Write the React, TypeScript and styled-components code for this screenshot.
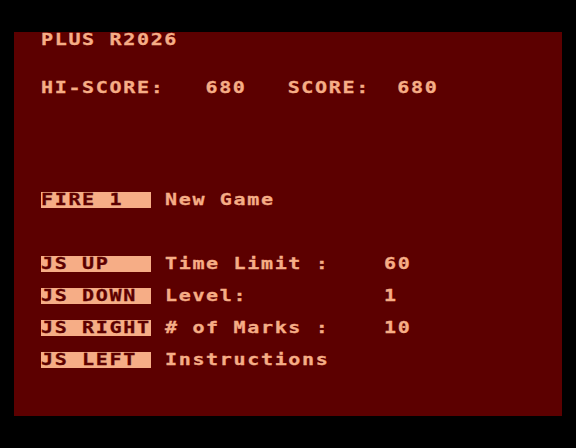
import React from 'react';
import styled, {createGlobalStyle} from 'styled-components';

// one character cell of the 40x24 text screen
const CW = 13.7;
const RH = 16;

const colors = {
    border: '#000000',
    screen: '#5c0000',
    ink: '#f6ad86',
};

const GlobalStyle = createGlobalStyle`
    html, body {
        margin: 0;
        padding: 0;
        background: ${colors.border};
    }
`

const Page = styled.div`
    width: 576px;
    height: 448px;
    padding: 32px 0 0 14px;
    box-sizing: border-box;
    background: ${colors.border};
    overflow: hidden;
`

const Screen = styled.div`
    width: ${40 * CW}px;
    height: ${24 * RH}px;
    background: ${colors.screen};
    color: ${colors.ink};
    display: flex;
    flex-direction: column;
    font-family: "DejaVu Sans Mono", "Liberation Mono", monospace;
    font-weight: 700;
    font-size: 16px;
    line-height: ${RH}px;
`

const Row = styled.div<{ $skip?: number }>`
    display: flex;
    height: ${RH}px;
    padding-left: ${2 * CW}px;
    margin-top: ${p => (p.$skip || 0) * RH}px;
`

// atari glyphs are wide, stretch the mono font to fill the cell
const Glyphs = styled.span`
    display: inline-block;
    white-space: pre;
    letter-spacing: ${CW / 1.25 - 9.63}px;
    transform: scaleX(1.25);
    transform-origin: left center;
    -webkit-text-stroke: 0.3px currentColor;
`

const Key = styled.div`
    width: ${8 * CW}px;
    margin-right: ${CW}px;
    background: ${colors.ink};
    color: ${colors.screen};
`

const Name = styled.div`
    width: ${16 * CW}px;
`

const Value = styled.div`
    width: ${4 * CW}px;
`

type Option = { key: string; name: string; value?: string; skip?: number };

const options: Option[] = [
    {key: 'FIRE 1', name: 'New Game', skip: 6},
    {key: 'JS UP', name: 'Time Limit :', value: '60', skip: 3},
    {key: 'JS DOWN', name: 'Level:', value: '1', skip: 1},
    {key: 'JS RIGHT', name: '# of Marks :', value: '10', skip: 1},
    {key: 'JS LEFT', name: 'Instructions', skip: 1},
];

export default function App() {
    return (
        <>
            <GlobalStyle/>
            <Page>
                <Screen>
                    <Row>
                        <Glyphs>PLUS R2026</Glyphs>
                    </Row>
                    <Row $skip={2}>
                        <Glyphs>{'HI-SCORE:   680   SCORE:  680'}</Glyphs>
                    </Row>
                    {options.map(o => (
                        <Row key={o.key} $skip={o.skip}>
                            <Key><Glyphs>{o.key}</Glyphs></Key>
                            <Name><Glyphs>{o.name}</Glyphs></Name>
                            {o.value && <Value><Glyphs>{o.value}</Glyphs></Value>}
                        </Row>
                    ))}
                </Screen>
            </Page>
        </>
    );
}
